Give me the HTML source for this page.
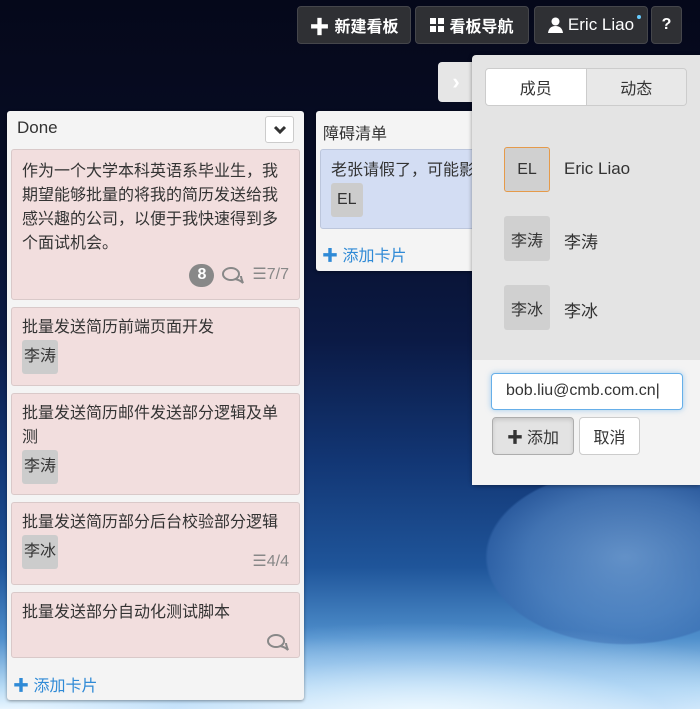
<!DOCTYPE html>
<html><head><meta charset="utf-8"><style>
*{box-sizing:border-box;margin:0;padding:0}
html,body{width:700px;height:709px;overflow:hidden}
#w{width:700px;height:709px;overflow:hidden;position:relative;font-family:"Liberation Sans","Noto Sans CJK SC",sans-serif;color:#333;
background:linear-gradient(180deg,#05081a 0%,#070d25 25%,#0b1a45 48%,#123674 65%,#1f559a 80%,#4f8fcc 90%,#b9dcf5 97%,#e8f5ff 100%);}
.moon{position:absolute;left:485px;top:470px;width:215px;height:175px;background:radial-gradient(ellipse 140px 88px at 140px 87px,rgba(122,166,216,.75),rgba(82,132,194,.7) 70%,rgba(58,108,176,.6) 98%,transparent 100%)}
.glow{position:absolute;left:0;top:610px;width:700px;height:99px;background:radial-gradient(ellipse 500px 120px at 60% 110%,rgba(240,250,255,.95),rgba(170,210,245,.5) 50%,transparent 80%)}
.tb{position:absolute;top:6px;height:38px;background:#2f3034;border:1px solid #45464b;border-radius:4px;color:#fff;font-size:16px;font-weight:bold;display:flex;align-items:center;justify-content:center;gap:5px}
.list{position:absolute;background:#f4f4f4;border-radius:3px;box-shadow:0 1px 3px rgba(0,0,0,.4)}
.lh{position:absolute;left:10px;top:7px;font-size:17px}
.card{position:absolute;left:4px;width:289px;background:#f2dede;border:1px solid #d9c9c9;border-radius:3px;padding:8px 10px;font-size:16px;line-height:24px;color:#333}
.tag{display:inline-block;background:#ccc;border-radius:3px;padding:4px 2px;font-size:16px;line-height:26px}
.add{position:absolute;color:#2f8ad6;font-size:16px}
.av{position:absolute;left:504px;width:46px;height:45px;background:#d0d0d0;border-radius:3px;display:flex;align-items:center;justify-content:center;font-size:16px}
.nm{position:absolute;left:564px;font-size:17px}
.meta{position:absolute;right:10px;color:#888;font-size:16px;display:flex;align-items:center;gap:8px}
</style></head><body><div id="w">
<div class="moon"></div><div class="glow"></div>
<div class="tb" style="left:297px;width:114px"><span style="font-size:20px">✚</span>新建看板</div>
<div class="tb" style="left:415px;width:114px"><svg width="14" height="14"><rect x="0" y="0" width="6" height="6" fill="#fff"/><rect x="8" y="0" width="6" height="6" fill="#fff"/><rect x="0" y="8" width="6" height="6" fill="#fff"/><rect x="8" y="8" width="6" height="6" fill="#fff"/></svg>看板导航</div>
<div class="tb" style="left:534px;width:114px;font-weight:normal;font-size:17px"><svg width="15" height="16"><circle cx="7.5" cy="4.5" r="4" fill="#fff"/><path d="M0 16 Q1 9 7.5 9 Q14 9 15 16Z" fill="#fff"/></svg>Eric Liao<span style="position:absolute;right:6px;top:8px;width:4px;height:4px;border-radius:50%;background:#6cf"></span></div>
<div class="tb" style="left:651px;width:31px">?</div>

<div class="list" style="left:7px;top:111px;width:297px;height:589px">
<div class="lh">Done</div>
<div style="position:absolute;left:258px;top:5px;width:29px;height:27px;background:#fff;border:1px solid #ccc;border-radius:3px;display:flex;align-items:center;justify-content:center"><svg width="14" height="10"><path d="M2 2 L7 7 L12 2" stroke="#333" stroke-width="3" fill="none"/></svg></div>
<div class="card" style="top:38px;height:151px;padding-top:10px">作为一个大学本科英语系毕业生，我期望能够批量的将我的简历发送给我感兴趣的公司，以便于我快速得到多个面试机会。
<div class="meta" style="bottom:12px"><span style="background:#888;color:#fff;border-radius:12px;width:25px;height:23px;display:flex;align-items:center;justify-content:center;font-weight:bold">8</span><svg width="22" height="18" viewBox="0 0 22 18"><ellipse cx="9" cy="8" rx="8" ry="6" fill="none" stroke="#888" stroke-width="2"/><path d="M13 13 Q18 14 21 17 Q19 12 19 10" fill="none" stroke="#888" stroke-width="2"/></svg><span>☰7/7</span></div></div>
<div class="card" style="top:196px;height:79px">批量发送简历前端页面开发<br><span class="tag">李涛</span></div>
<div class="card" style="top:282px;height:102px">批量发送简历邮件发送部分逻辑及单测<br><span class="tag">李涛</span></div>
<div class="card" style="top:391px;height:83px">批量发送简历部分后台校验部分逻辑<br><span class="tag">李冰</span><div class="meta" style="bottom:10px">☰4/4</div></div>
<div class="card" style="top:481px;height:66px">批量发送部分自动化测试脚本<div class="meta" style="bottom:6px"><svg width="22" height="18" viewBox="0 0 22 18"><ellipse cx="9" cy="8" rx="8" ry="6" fill="none" stroke="#888" stroke-width="2"/><path d="M13 13 Q18 14 21 17 Q19 12 19 10" fill="none" stroke="#888" stroke-width="2"/></svg></div></div>
<div class="add" style="left:6px;top:561px">✚ 添加卡片</div>
</div>

<div class="list" style="left:316px;top:111px;width:170px;height:160px">
<div class="lh" style="left:7px;top:9px;font-size:16px">障碍清单</div>
<div class="card" style="top:38px;width:166px;height:80px;background:#d3ddf3;border-color:#bcc6dc;white-space:nowrap;overflow:hidden;padding-top:9px">老张请假了，可能影响<br><span class="tag" style="padding:4px 6px">EL</span></div>
<div class="add" style="left:6px;top:131px">✚ 添加卡片</div>
</div>

<div style="position:absolute;left:438px;top:62px;width:36px;height:40px;background:#e6e6e6;border-radius:4px 0 0 4px;color:#fff;font-size:22px;font-weight:bold;display:flex;align-items:center;justify-content:center">›</div>
<div style="position:absolute;left:472px;top:55px;width:228px;height:430px;background:#e4e4e4;border-radius:4px 0 0 4px;box-shadow:0 1px 4px rgba(0,0,0,.4)">
<div style="position:absolute;left:0;top:305px;width:228px;height:125px;background:#f3f3f3"></div>
<div style="position:absolute;left:13px;top:13px;width:202px;height:38px;border:1px solid #ccc;border-radius:4px;display:flex;font-size:16px;overflow:hidden">
<div style="flex:1;background:#fff;display:flex;align-items:center;justify-content:center">成员</div>
<div style="flex:1;background:#e8e8e8;border-left:1px solid #ccc;display:flex;align-items:center;justify-content:center">动态</div></div>
</div>
<div class="av" style="top:147px;border:1px solid #e59a4a">EL</div><div class="nm" style="top:159px">Eric Liao</div>
<div class="av" style="top:216px">李涛</div><div class="nm" style="top:228px">李涛</div>
<div class="av" style="top:285px">李冰</div><div class="nm" style="top:297px">李冰</div>
<div style="position:absolute;left:491px;top:373px;width:192px;height:37px;background:#fff;border:1px solid #66afe9;border-radius:4px;box-shadow:0 0 6px rgba(102,175,233,.6);font-size:16px;padding:8px 14px;white-space:nowrap;overflow:hidden">bob.liu@cmb.com.cn|</div>
<div style="position:absolute;left:492px;top:417px;width:82px;height:38px;background:#e3e3e3;border:1px solid #adadad;border-radius:4px;font-size:16px;display:flex;align-items:center;justify-content:center;gap:4px;box-shadow:inset 0 2px 4px rgba(0,0,0,.12)"><b>✚</b>添加</div>
<div style="position:absolute;left:579px;top:417px;width:61px;height:38px;background:#fff;border:1px solid #ccc;border-radius:4px;font-size:16px;display:flex;align-items:center;justify-content:center">取消</div>
</div></body></html>
